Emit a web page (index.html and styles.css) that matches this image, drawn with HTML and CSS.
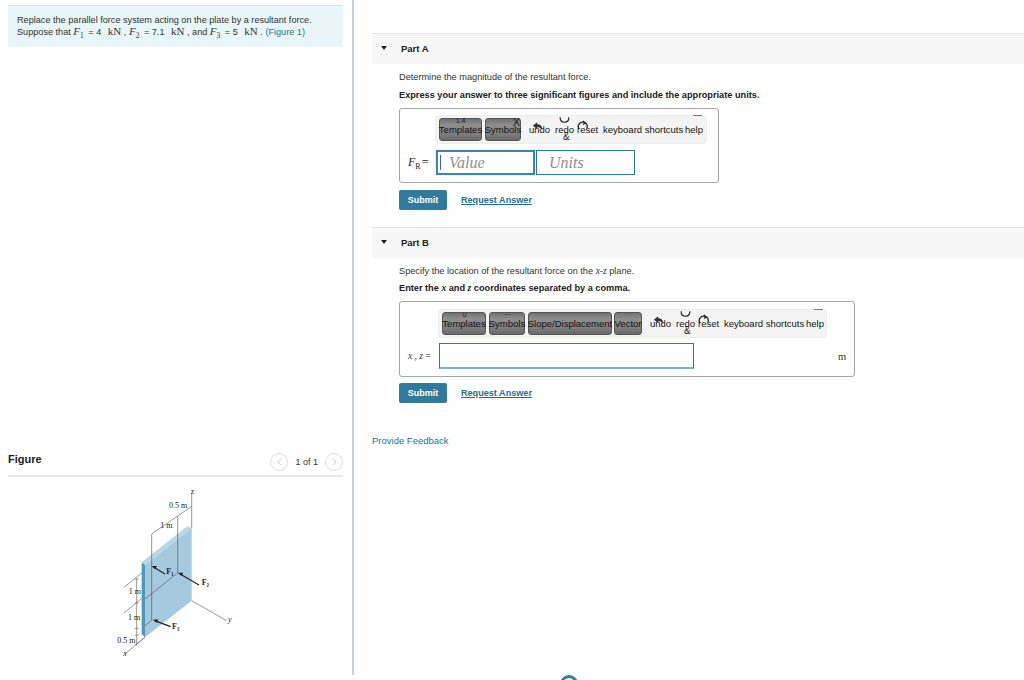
FILE: index.html
```html
<!DOCTYPE html>
<html lang="en">
<head>
<meta charset="utf-8">
<title>Parallel force system</title>
<link rel="stylesheet" href="styles.css">
</head>
<body>
<div class="page">
  <aside class="left">
    <div class="intro">
      <p>Replace the parallel force system acting on the plate by a resultant force.</p>
      <p>Suppose that <i class="m">F</i><sub class="m">1</sub> = 4 <span class="m kn">kN</span> , <i class="m">F</i><sub class="m">2</sub> = 7.1 <span class="m kn">kN</span> , and <i class="m">F</i><sub class="m">3</sub> = 5 <span class="m kn">kN</span> . <a class="plain-link">(Figure 1)</a></p>
    </div>
    <div class="fig-head">
      <strong>Figure</strong>
      <div class="pager">
        <span class="circle"><svg class="chev" viewBox="0 0 6 10"><path d="M5 1L1 5L5 9"/></svg></span>
        <span class="count">1 of 1</span>
        <span class="circle"><svg class="chev" viewBox="0 0 6 10"><path d="M1 1L5 5L1 9"/></svg></span>
      </div>
    </div>
    <svg class="plate" viewBox="0 0 450 540" role="img" aria-label="Plate with forces F1, F2, F3">
      <g fill="none" stroke="#666" stroke-width="2">
        <path d="M275 45V148M275 365L380 425M135 475L75 525"/>
        <path d="M155 165L275 82M155 165V182M233 112V140"/>
        <path d="M72 325L155 258M72 402L135 350M105 498L135 475"/>
        <path d="M110 298V500M104 300H116M104 372H116M104 448H116M104 468H116"/>
      </g>
      <polygon points="125,250 262,142 275,148 135,258" fill="#b9d6e4"/>
      <polygon points="125,250 135,258 135,475 125,465" fill="#4d98b2"/>
      <polygon points="135,258 275,148 275,365 135,475" fill="#a5c9de"/>
      <g fill="none" stroke="#556" stroke-width="2">
        <path d="M155 182V423M233 140V282L135 360M155 423L135 440"/>
      </g>
      <g stroke="#222" stroke-width="3.500" fill="#222">
        <path d="M160 264L195 285M239 284L297 318M164 425L212 443" fill="none"/>
        <path d="M155 261l16 0l-6 10zM234 281l16 0l-6 10zM159 422l16 -1l-5 10z" stroke="none"/>
      </g>
      <g class="fig-label">
        <text x="272" y="44">z</text>
        <text x="207" y="86">0.5 m</text>
        <text x="181" y="147">1 m</text>
        <text x="86" y="346">1 m</text>
        <text x="84" y="422">1 m</text>
        <text x="52" y="492">0.5 m</text>
        <text x="70" y="530" class="it">x</text>
        <text x="384" y="428" class="it">y</text>
        <text x="199" y="284" class="b">F₁</text>
        <text x="305" y="318" class="b">F₂</text>
        <text x="216" y="449" class="b">F₃</text>
      </g>
    </svg>
  </aside>

  <main class="right">
    <section class="part part-a">
      <header class="part-head"><span class="caret"></span><strong>Part A</strong></header>
      <div class="part-body">
        <p class="q">Determine the magnitude of the resultant force.</p>
        <p class="q b">Express your answer to three significant figures and include the appropriate units.</p>
        <div class="answer answer-a">
          <div class="toolbar tb-a">
            <span class="btn w43">Templates<span class="g g-top">1.4</span></span>
            <span class="btn w36">Symbols<span class="g g-x">X</span></span>
            <span class="tool t-undo"><svg class="ic" viewBox="0 0 14 10"><path d="M1 4L6 0V2.500C10 2.500 12 5 12 9C10 6.500 8.500 6 6 6V8Z"/></svg>undo</span>
            <span class="tool t-redo"><svg class="arc" viewBox="0 0 10 5"><path d="M1 0C1 6 9 6 9 0"/></svg>redo<span class="amp">&amp;</span></span>
            <span class="tool t-reset"><svg class="ic2" viewBox="0 0 12 12"><path d="M2 9A4.500 4.500 0 1 1 10 8M6 1L8 3L6 4.500"/></svg>reset</span>
            <span class="tool t-kb">keyboard shortcuts</span>
            <span class="tool t-help"><span class="dash"></span>help</span>
          </div>
          <div class="row-a">
            <span class="lbl"><i>F</i><sub>R</sub> =</span>
            <div class="field focus"><span class="cursor"></span>Value</div>
            <div class="field">Units</div>
          </div>
        </div>
        <div class="actions">
          <a class="submit">Submit</a>
          <a class="req">Request Answer</a>
        </div>
      </div>
    </section>

    <section class="part part-b">
      <header class="part-head"><span class="caret"></span><strong>Part B</strong></header>
      <div class="part-body">
        <p class="q">Specify the location of the resultant force on the <i class="m">x</i>-<i class="m">z</i> plane.</p>
        <p class="q b">Enter the <i class="m">x</i> and <i class="m">z</i> coordinates separated by a comma.</p>
        <div class="answer answer-b">
          <div class="toolbar tb-b">
            <span class="btn w44">Templates<span class="g g-top">∪</span></span>
            <span class="btn w36b">Symbols<span class="g g-top">⋯</span></span>
            <span class="btn w84">Slope/Displacement</span>
            <span class="btn w28">Vector</span>
            <span class="tool t-undo b2"><svg class="ic" viewBox="0 0 14 10"><path d="M1 4L6 0V2.500C10 2.500 12 5 12 9C10 6.500 8.500 6 6 6V8Z"/></svg>undo</span>
            <span class="tool t-redo"><svg class="arc" viewBox="0 0 10 5"><path d="M1 0C1 6 9 6 9 0"/></svg>redo<span class="amp">&amp;</span></span>
            <span class="tool t-reset"><svg class="ic2" viewBox="0 0 12 12"><path d="M2 9A4.500 4.500 0 1 1 10 8M6 1L8 3L6 4.500"/></svg>reset</span>
            <span class="tool t-kb">keyboard shortcuts</span>
            <span class="tool t-help"><span class="dash"></span>help</span>
          </div>
          <div class="row-b">
            <span class="lbl-b"><i>x</i> , <i>z</i> =</span>
            <div class="field-b"></div>
            <span class="unit">m</span>
          </div>
        </div>
        <div class="actions">
          <a class="submit">Submit</a>
          <a class="req">Request Answer</a>
        </div>
      </div>
    </section>

    <a class="feedback">Provide Feedback</a>
  </main>
</div>
<span class="spinner"></span>
</body>
</html>
```

FILE: styles.css
```css
* { box-sizing: border-box; }
html, body { margin: 0; height: 680px; overflow: hidden; background: #fff; }
body { font-family: "Liberation Sans", Arial, sans-serif; font-size: 9.200px; color: #333; position: relative; }
p { margin: 0; }
.page { display: flex; align-items: flex-start; height: 680px; }

.left { width: 354px; height: 675px; padding: 5px 9px 0 8px; border-right: 2px solid #c6d3df; flex: none; }
.intro { height: 42px; padding: 9px 9px 0; background: #e8f6f7; border-top: 1px solid #d9e2e8; line-height: 11px; font-size: 9.130px; white-space: nowrap; }
.m { font-family: "Liberation Serif", serif; font-size: 11px; }
.intro sub.m { font-size: 7.500px; line-height: 0; margin-right: 2px; }
.kn { margin-left: 4px; }
.plain-link { color: #1f7396; }

.fig-head { display: flex; justify-content: space-between; align-items: center; margin-top: 403px; height: 27px; border-bottom: 2px solid #e6eaed; padding-bottom: 4px; }
.fig-head strong { font-size: 11px; color: #222; margin-top: -4px; }
.pager { display: flex; align-items: center; gap: 7px; margin-top: 2px; font-size: 9px; }
.circle { width: 18px; height: 18px; border: 1px solid #dcdfe2; border-radius: 50%; display: flex; align-items: center; justify-content: center; }
.chev { width: 5px; height: 8px; fill: none; stroke: #b9bec2; stroke-width: 1; }
.count { color: #333; }
.plate { display: block; width: 150px; height: 180px; margin: 2px 0 0 92px; }
.fig-label text { font-family: "Liberation Serif", serif; font-size: 24px; fill: #222; }
.fig-label .it { font-style: italic; }
.fig-label .b { font-weight: bold; }

.right { flex: 1; padding: 33px 0 0 18px; min-width: 0; }
.part-head { height: 31px; padding: 0 0 2px 9px; background: #f7f7f7; border-top: 1px solid #e6e6e6; display: flex; align-items: center; font-size: 9.500px; color: #222; }
.caret { width: 0; height: 0; border-left: 3.500px solid transparent; border-right: 3.500px solid transparent; border-top: 4px solid #222; margin-right: 14px; }
.part-body { padding: 8px 0 0 27px; }
.q { height: 18px; line-height: 11px; color: #333; }
.part-b .q { height: 17px; }
.q .m { font-size: 9.500px; }
.q.b, .part-b .q.b { font-weight: bold; height: 18px; color: #222; }

.answer { border: 1px solid #a6a6a6; border-radius: 3px; position: relative; }
.answer-a { width: 320px; height: 75px; padding: 6px 0 0 35px; }
.answer-b { width: 456px; height: 76px; padding: 6px 0 0 38px; }
.toolbar { display: flex; align-items: center; height: 29px; background: #f4f4f4; border-radius: 4px; border: 1px solid #ececec; font-size: 9.500px; color: #111; white-space: nowrap; }
.tb-a { width: 272px; padding-left: 3px; }
.tb-b { width: 389px; padding-left: 3px; }
.btn { position: relative; height: 23px; background: linear-gradient(#727272, #8f8f8f 30%, #7e7e7e 70%, #686868); border: 1px solid #555; border-radius: 3px; display: flex; align-items: center; justify-content: center; margin-right: 3px; flex: none; }
.w43 { width: 43px; }
.w36 { width: 36px; }
.w44 { width: 44px; }
.w36b { width: 36px; }
.w84 { width: 84px; margin-right: 2px; }
.w28 { width: 28px; }
.g { position: absolute; font-size: 7px; top: -2px; left: 0; right: 0; text-align: center; color: #222; }
.g-x { font-size: 11px; left: auto; right: 0; top: -3px; }
.tool { position: relative; display: inline-block; flex: none; }
.t-undo { margin-left: 5px; width: 26px; }
.t-redo { width: 22px; }
.t-reset { width: 26px; }
.t-kb { width: 82px; }
.t-help { width: 17px; }
.ic { position: absolute; width: 12px; height: 9px; left: 3px; top: -2px; fill: #333; }
.arc { position: absolute; width: 11px; height: 6px; left: 4px; top: -7px; fill: none; stroke: #222; stroke-width: 1; overflow: visible; }
.ic2 { position: absolute; width: 12px; height: 12px; left: 0; top: -4px; fill: none; stroke: #222; stroke-width: 1.300; }
.amp { position: absolute; left: 8px; top: 7px; font-size: 10px; color: #222; }
.dash { position: absolute; width: 9px; height: 1px; background: #777; top: -9px; right: 0; }

.row-a { display: flex; align-items: center; margin-top: 6px; }
.lbl { margin-left: -27px; width: 28px; font-family: "Liberation Serif", serif; font-size: 12px; word-spacing: -2px; white-space: nowrap; color: #222; }
.lbl sub { font-size: 8px; line-height: 0; }
.field { position: relative; width: 99px; height: 25px; margin-right: 1px; border: 1px solid #2c7a9c; font-family: "Liberation Serif", serif; font-style: italic; font-size: 16px; color: #8e8e8e; padding: 3px 0 0 12px; line-height: 18px; background: #fff; }
.field.focus { border: 2px solid #3f86a4; padding-left: 11px; padding-top: 2px; box-shadow: 0 0 1px #7fb3c8; }
.cursor { position: absolute; left: 2px; top: 3px; width: 1px; height: 15px; background: #3a5fc4; }
.row-b { display: flex; align-items: center; margin-top: 5px; margin-left: -38px; }
.answer-b { padding-top: 7px; }
.lbl-b { width: 39px; padding-left: 8px; font-family: "Liberation Serif", serif; font-size: 9.500px; color: #333; white-space: nowrap; }
.field-b { width: 255px; height: 26px; border: 1px solid #2c7a9c; border-bottom: 2px solid #7fb0c6; background: #fff; }
.unit { margin-left: 144px; font-family: "Liberation Serif", serif; font-size: 10.500px; color: #333; }

.actions { display: flex; align-items: center; gap: 14px; margin-top: 7px; }
.part-b .actions { margin-top: 6px; }
.submit { width: 48px; height: 20px; background: #2f7a9d; color: #fff; border-radius: 2px; font-weight: bold; font-size: 9px; display: flex; align-items: center; justify-content: center; }
.req { color: #1f6f93; font-weight: bold; font-size: 9.100px; text-decoration: underline; }
.part-b { margin-top: 17px; }
.feedback { display: block; margin-top: 32px; font-size: 9.500px; color: #1f7396; }
.spinner { position: absolute; left: 560px; top: 675px; width: 18px; height: 18px; border: 3px solid #2f7d9f; border-radius: 50%; }
```
